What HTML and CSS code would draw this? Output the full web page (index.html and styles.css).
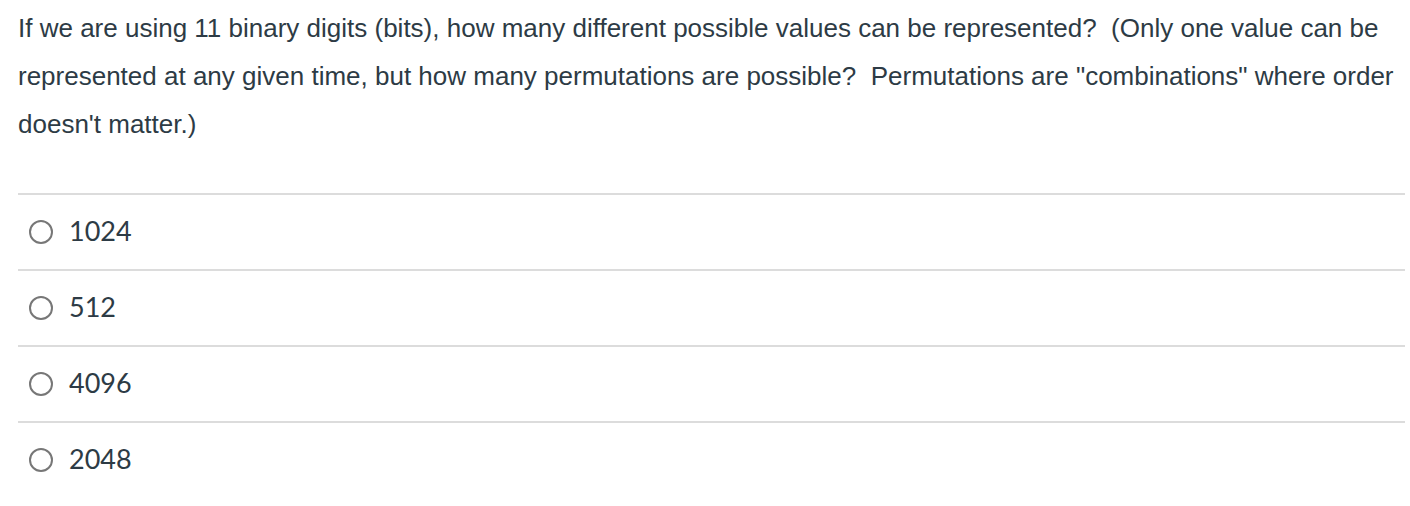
FILE: index.html
```html
<!DOCTYPE html>
<html lang="en">
<head>
<meta charset="utf-8">
<title>Quiz question</title>
<link rel="stylesheet" href="styles.css">
</head>
<body>
<div class="question">
  <p class="qtext">If we are using 11 binary digits (bits), how many different possible values can be represented?&nbsp; (Only one value can be represented at any given time, but how many permutations are possible?&nbsp; Permutations are "combinations" where order doesn't matter.)</p>
  <div class="answers">
    <label class="answer"><span class="radio"></span><span class="atext">1024</span></label>
    <label class="answer"><span class="radio"></span><span class="atext">512</span></label>
    <label class="answer"><span class="radio"></span><span class="atext">4096</span></label>
    <label class="answer"><span class="radio"></span><span class="atext">2048</span></label>
  </div>
</div>
</body>
</html>
```

FILE: styles.css
```css
html, body {
  margin: 0;
  padding: 0;
  background: #ffffff;
}

.question {
  padding: 4px 5px 0 18px;
  color: #2d3b45;
}

.qtext {
  margin: 0 0 45px 0;
  font-family: "Liberation Sans", Arial, sans-serif;
  font-size: 26px;
  line-height: 48px;
}

.answers {
  display: flex;
  flex-direction: column;
}

.answer {
  display: flex;
  align-items: center;
  height: 74px;
  border-top: 2px solid #dcdcdc;
  padding-left: 11px;
}

.radio {
  width: 20px;
  height: 20px;
  border: 2px solid #777777;
  border-radius: 50%;
  flex: none;
  margin-right: 16px;
}

.atext {
  font-family: Lato, "Liberation Sans", sans-serif;
  font-size: 27px;
  line-height: 30px;
  color: #2d3b45;
  position: relative;
  top: -1px;
}
```
